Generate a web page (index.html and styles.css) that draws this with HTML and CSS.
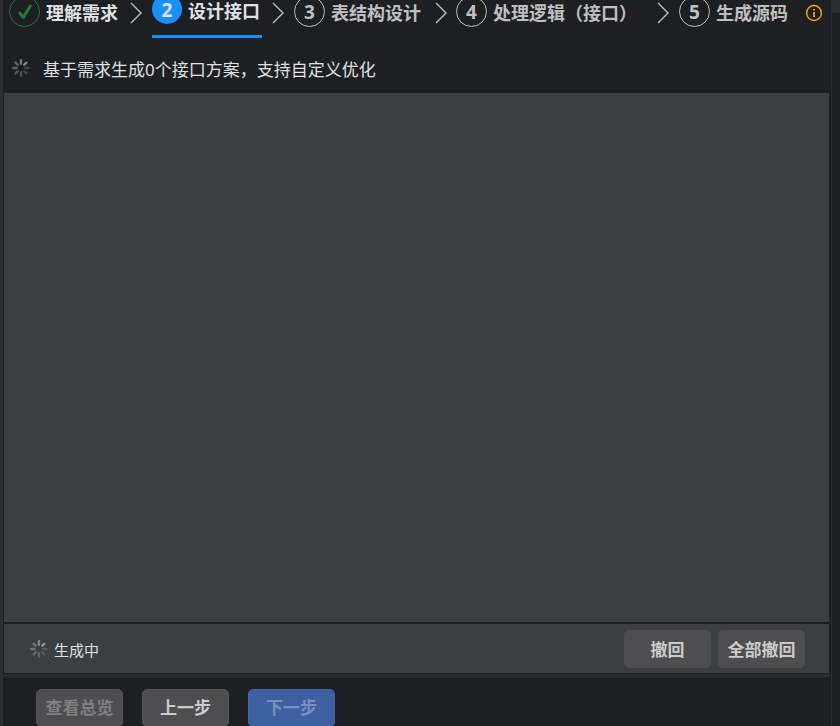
FILE: index.html
```html
<!DOCTYPE html>
<html lang="zh-CN">
<head>
    <meta charset="UTF-8">
    <meta name="viewport" content="width=device-width, initial-scale=1.0">
    <title>设计接口</title>
    <link rel="stylesheet" href="styles.css">
</head>

<body>

    <!-- spinner spokes, shared by both loading rows -->
    <svg width="0" height="0" class="defs">
        <symbol id="spinner" viewBox="0 0 18 18">
            <g stroke="#a9abad" stroke-width="2.3" stroke-linecap="round">
                <path d="M9 1.2v3.6" opacity=".65"/>
                <path d="M14.4 3.6l-2.2 2.2" opacity=".75"/>
                <path d="M16.8 9h-3.6" opacity=".25"/>
                <path d="M14.4 14.4l-2.2-2.2" opacity=".25"/>
                <path d="M9 16.8v-3.6" opacity=".35"/>
                <path d="M3.6 14.4l2.2-2.2" opacity=".4"/>
                <path d="M1.2 9h3.6" opacity=".5"/>
                <path d="M3.6 3.6l2.2 2.2" opacity=".5"/>
            </g>
        </symbol>
    </svg>

    <div class="window">
        <div class="main">
            <div class="steps">
                <div class="step done">
                    <span class="circle">
                        <svg width="14" height="16" viewBox="0 0 14 16"><path d="M2 9.2l3.4 4.3L12.2 2" fill="none" stroke="#23783a" stroke-width="3" stroke-linecap="round" stroke-linejoin="round"/></svg>
                    </span>
                    <span class="label">理解需求</span>
                </div>
                <svg class="arrow arrow1" viewBox="0 0 12 22"><path d="M1 1l10 10L1 21"/></svg>
                <div class="step active">
                    <span class="circle">2</span>
                    <span class="label">设计接口</span>
                </div>
                <svg class="arrow arrow2" viewBox="0 0 12 22"><path d="M1 1l10 10L1 21"/></svg>
                <div class="step">
                    <span class="circle">3</span>
                    <span class="label">表结构设计</span>
                </div>
                <svg class="arrow arrow3" viewBox="0 0 12 22"><path d="M1 1l10 10L1 21"/></svg>
                <div class="step">
                    <span class="circle">4</span>
                    <span class="label">处理逻辑（接口）</span>
                </div>
                <svg class="arrow arrow4" viewBox="0 0 12 22"><path d="M1 1l10 10L1 21"/></svg>
                <div class="step">
                    <span class="circle">5</span>
                    <span class="label">生成源码</span>
                </div>
                <svg class="info" viewBox="0 0 18 18">
                    <circle cx="9" cy="9" r="7.4" fill="none" stroke="#f0a30a" stroke-width="1.5"/>
                    <path d="M9 8v5M9 5v1.6" stroke="#f0a30a" stroke-width="1.8"/>
                </svg>
            </div>

            <div class="tip">
                <svg class="spinner"><use href="#spinner"/></svg>
                <span>基于需求生成0个接口方案，支持自定义优化</span>
            </div>

            <div class="panel"></div>

            <div class="status">
                <svg class="spinner"><use href="#spinner"/></svg>
                <span>生成中</span>
                <div class="status-actions">
                    <button class="btn">撤回</button>
                    <button class="btn">全部撤回</button>
                </div>
            </div>

            <div class="footer">
                <button class="btn" disabled>查看总览</button>
                <button class="btn">上一步</button>
                <button class="btn primary" disabled>下一步</button>
            </div>
        </div>
        <div class="side"></div>
    </div>

</body>
</html>
```
FILE: styles.css
```css
* {
    box-sizing: border-box;
}

body {
    margin: 0;
    height: 726px;
    overflow: hidden;
    background: #1e1f22;
    font-family: "Noto Sans", "Noto Sans CJK SC", sans-serif;
    color: #dfe1e5;
}

svg {
    display: block;
    flex: none;
}

.defs {
    position: absolute;
}

.window {
    display: flex;
    height: 726px;
    border-left: 3px solid #2b2d30;
}

.main {
    width: 828px;
    height: 726px;
    overflow: hidden;
}

.side {
    flex: 1;
    border-left: 1px solid #2b2d30;
    border-top: 13px solid #2b2d30;
}

.steps {
    display: flex;
    align-items: flex-start;
    height: 50px;
    margin-top: -4px;
    padding-left: 6px;
}

.step {
    display: flex;
    align-items: center;
    gap: 6px;
    height: 31px;
    font-size: 18px;
    line-height: 18px;
    font-weight: bold;
    color: #bfbfbf;
    white-space: nowrap;
}

.label {
    padding-top: 2px;
}

.circle {
    display: flex;
    align-items: center;
    justify-content: center;
    width: 31px;
    height: 31px;
    padding-top: 1px;
    border: 1.5px solid #bfbfbf;
    border-radius: 50%;
    font-size: 19px;
}

.done {
    color: #dfe1e5;
}

.done .circle {
    border-color: #23783a;
}

.active {
    height: 44px;
    margin-top: -2px;
    padding-right: 2px;
    padding-bottom: 11px;
    border-bottom: 3px solid #1890ff;
    color: #dfe1e5;
}

.active .label {
    padding-top: 3px;
}

.active .circle {
    width: 30px;
    height: 30px;
    border: none;
    background: #1890ff;
}

.arrow {
    width: 12px;
    height: 22px;
    margin-top: 6px;
    fill: none;
    stroke: #bfbfbf;
    stroke-width: 1.4;
}

.arrow1 {
    margin-left: 12px;
    margin-right: 10px;
}

.arrow2 {
    margin-left: 10px;
    margin-right: 10px;
}

.arrow3 {
    margin-left: 14px;
    margin-right: 9px;
}

.arrow4 {
    margin-left: 20px;
    margin-right: 10px;
}

.info {
    width: 18px;
    height: 18px;
    margin-top: 8px;
    margin-left: 17px;
}

.spinner {
    width: 18px;
    height: 18px;
}

.tip {
    display: flex;
    align-items: center;
    gap: 13px;
    height: 47px;
    padding-left: 9px;
    padding-bottom: 2px;
    font-size: 17px;
}

.tip .spinner {
    margin-top: -2px;
}

.panel {
    width: 825px;
    height: 529px;
    margin-left: 1px;
    background: #3c3f41;
}

.status {
    display: flex;
    align-items: center;
    width: 825px;
    height: 49px;
    margin: 2px 0 1px 1px;
    padding: 0 24px 0 26px;
    background: #3c3f41;
    font-size: 15px;
}

.status > span {
    margin: 2px 0 0 6px;
}

.status-actions {
    display: flex;
    gap: 7px;
    margin-left: auto;
    margin-top: 1px;
}

.btn {
    width: 87px;
    height: 38px;
    padding: 0;
    border: 1px solid #545456;
    border-radius: 5px;
    background: #4e4e50;
    color: #cbcbcb;
    font-family: inherit;
    font-size: 17px;
    font-weight: bold;
    line-height: 36px;
}

.status .btn {
    border-color: #4e4e50;
    padding-top: 1px;
}

.btn:disabled {
    color: #808082;
}

.footer {
    display: flex;
    gap: 19px;
    width: 827px;
    border-top: 3px solid #2b2d30;
    padding: 12px 0 0 33px;
}

.btn.primary {
    background: #3f5fa3;
    border-color: #4365ad;
}

.btn.primary:disabled {
    color: #7a91c0;
}
```
